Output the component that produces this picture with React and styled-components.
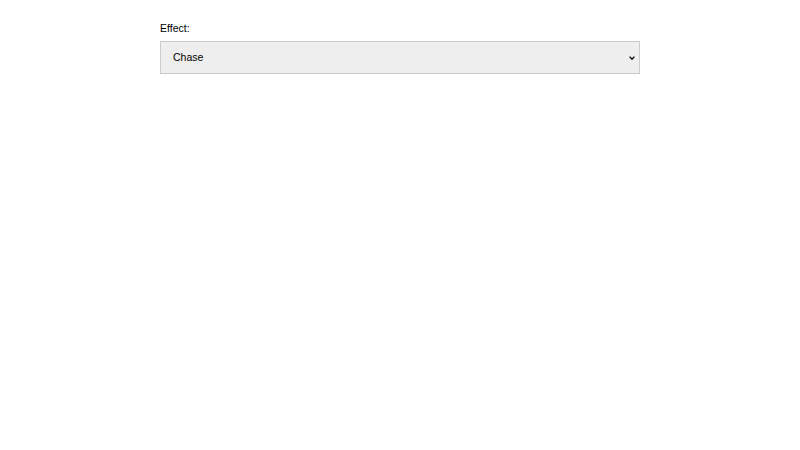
import React from "react";
import styled, { createGlobalStyle } from "styled-components";

const GlobalStyle = createGlobalStyle`
  body {
    margin: 0;
    background: #fff;
    font-family: "Liberation Sans", Arial, sans-serif;
  }
`;

const chevron =
  "url(\"data:image/svg+xml,%3Csvg xmlns='http://www.w3.org/2000/svg' width='6' height='4' viewBox='0 0 6 4'%3E%3Cpath d='M0.6 0.6 L3 3.2 L5.4 0.6' fill='none' stroke='%23000' stroke-width='1.3'/%3E%3C/svg%3E\")";

function App() {
  return (
    <>
      <GlobalStyle />
      <Wrapper>
        <Label htmlFor="effect">Effect:</Label>
        <Select id="effect" defaultValue="chase">
          <option value="chase">Chase</option>
          <option value="fade">Fade</option>
          <option value="rainbow">Rainbow</option>
        </Select>
      </Wrapper>
    </>
  );
}

const Wrapper = styled.div`
  width: 480px;
  margin: 0 auto;
  padding-top: 21px;
  display: flex;
  flex-direction: column;
`;
const Label = styled.label`
  font-size: 10.5px;
  line-height: 14px;
  color: #000;
  margin-bottom: 6px;
`;
const Select = styled.select`
  appearance: none;
  width: 100%;
  height: 33px;
  padding: 0 20px 1px 12px;
  font-size: 10.5px;
  font-family: "Liberation Sans", Arial, sans-serif;
  background: #eee ${chevron} no-repeat right 4px center;
  border: 1px solid #ccc;
  border-radius: 0;
  color: #000;
`;

export default App;
